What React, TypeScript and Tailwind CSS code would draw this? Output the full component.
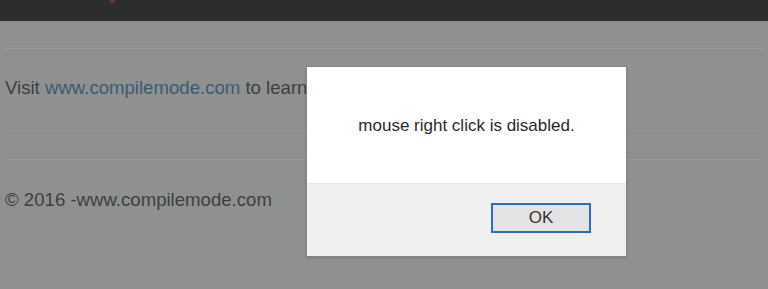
export default function App() {
  return (
    <div className="relative h-[289px] w-[768px] overflow-hidden bg-[#8f9191] font-['Liberation_Sans',Arial,sans-serif]">
      <div className="relative h-[21px] bg-[#2b2d2f]">
        <span className="absolute left-[110px] top-0 h-[3px] w-[5px] bg-[#6a3838]" />
      </div>

      <div className="px-[5px]">
        <div className="mt-[26px] h-[2px] border-t border-[#8a8c8c] border-b border-b-[#979999]" />
        <p className="mt-[28px] text-[18.6px] leading-[22px] text-[#3d3f40]">
          Visit <span className="text-[#3c5a73]">www.compilemode.com</span> to learn more about programming.
        </p>
        <div className="mt-[30px] h-[2px] border-t border-[#8a8c8c] border-b border-b-[#979999]" />
        <div className="mt-[27px] h-[2px] border-t border-[#8a8c8c] border-b border-b-[#979999]" />
        <p className="mt-[29px] text-[18.6px] leading-[22px] text-[#3d3f40]">© 2016 -www.compilemode.com</p>
      </div>

      <div className="absolute left-[306px] top-[66px] flex h-[191px] w-[321px] flex-col border border-[#858787] bg-white shadow-[0_1px_2px_rgba(0,0,0,0.2)]">
        <div className="flex h-[116px] items-center justify-center pt-[2px]">
          <span className="text-[17px] text-[#2a2a2a]">mouse right click is disabled.</span>
        </div>
        <div className="flex flex-1 items-start justify-end border-t border-[#e6e6e6] bg-[#f0f0f0] pr-[35px] pt-[19px]">
          <button className="flex h-[30px] w-[100px] items-center justify-center border-2 border-[#2b6fb6] bg-[#e3e3e3] text-[17px] text-[#333]">
            OK
          </button>
        </div>
      </div>
    </div>
  )
}
